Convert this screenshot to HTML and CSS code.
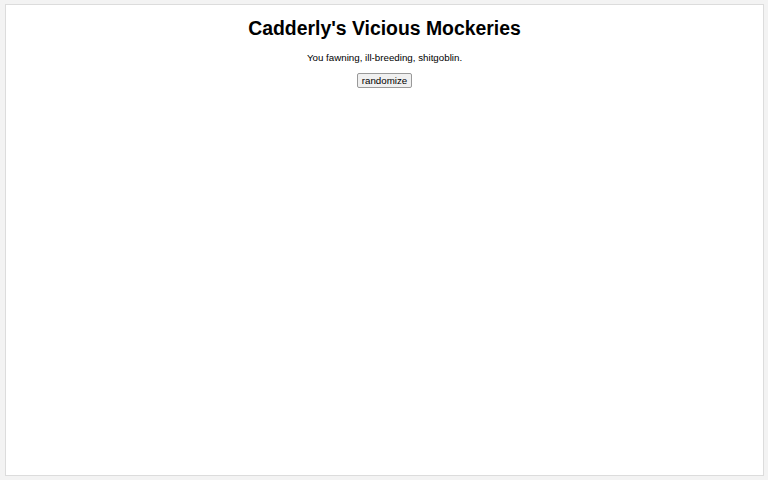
FILE: index.html
```html
<!DOCTYPE html>
<html lang="en">
<head>
    <meta charset="UTF-8">
    <meta name="viewport" content="width=device-width, initial-scale=1.0">
    <title>Cadderly's Vicious Mockeries</title>
    <link rel="stylesheet" href="styles.css">
</head>
<body>
    <div class="page">
        <h1>Cadderly's Vicious Mockeries</h1>
        <p id="mockery" class="mockery">You fawning, ill-breeding, shitgoblin.</p>
        <button id="randomize" class="randomize">randomize</button>
    </div>

    <script>
        const first = ["fawning", "craven", "beslubbering", "droning", "gleeking", "puking"];
        const second = ["ill-breeding", "beef-witted", "clay-brained", "dread-bolted", "rump-fed"];
        const third = ["shitgoblin", "lout", "canker-blossom", "hedge-pig", "measle"];

        function pick(list) {
            return list[Math.floor(Math.random() * list.length)];
        }

        document.getElementById("randomize").addEventListener("click", function() {
            document.getElementById("mockery").textContent =
                "You " + pick(first) + ", " + pick(second) + ", " + pick(third) + ".";
        });
    </script>
</body>
</html>
```

FILE: styles.css
```css
* {
    box-sizing: border-box;
}

html, body {
    height: 100%;
}

body {
    margin: 0;
    padding: 4px 4px 4px 5px;
    background-color: #f3f3f3;
    font-family: "Liberation Sans", Arial, sans-serif;
    color: #000;
}

/* White sheet holding everything */
.page {
    height: 100%;
    background-color: #fff;
    border: 1px solid #dcdcdc;
    display: flex;
    flex-direction: column;
    align-items: center;
    padding-top: 12px;
}

h1 {
    margin: 0;
    font-size: 19.4px;
    font-weight: bold;
}

.mockery {
    margin: 12px 0 10px;
    font-size: 9.75px;
}

.randomize {
    font-family: "Liberation Sans", Arial, sans-serif;
    font-size: 9.75px;
    padding: 1px 4px;
    background-color: #f0f0f0;
    border: 1px solid #999;
    border-radius: 2px;
}
```
